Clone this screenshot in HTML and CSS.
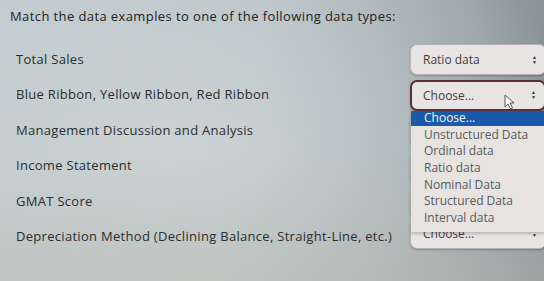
FILE: index.html
```html
<!DOCTYPE html>
<html>
<head>
<meta charset="utf-8">
<link rel="stylesheet" href="styles.css">
</head>
<body>
<div class="page">
  <h1 class="title">Match the data examples to one of the following data types:</h1>
  <div class="rows">
    <div class="row">
      <div class="label">Total Sales</div>
      <div class="select"><span>Ratio data</span><span class="arrows">&#9650;<br>&#9660;</span></div>
    </div>
    <div class="row">
      <div class="label">Blue Ribbon, Yellow Ribbon, Red Ribbon</div>
      <div class="select focus"><span>Choose...</span><span class="arrows">&#9650;<br>&#9660;</span>
        <svg class="cursor" width="12" height="16" viewBox="0 0 12 16"><path d="M1 1 L1 13 L4 10 L6.5 15 L8.5 14 L6 9 L10 9 Z" fill="#fff" stroke="#555" stroke-width="1"/></svg>
        <ul class="menu">
          <li class="active">Choose...</li>
          <li>Unstructured Data</li>
          <li>Ordinal data</li>
          <li>Ratio data</li>
          <li>Nominal Data</li>
          <li>Structured Data</li>
          <li>Interval data</li>
        </ul>
      </div>
    </div>
    <div class="row">
      <div class="label">Management Discussion and Analysis</div>
      <div class="select covered"></div>
    </div>
    <div class="row">
      <div class="label">Income Statement</div>
      <div class="select covered"></div>
    </div>
    <div class="row">
      <div class="label">GMAT Score</div>
      <div class="select covered"></div>
    </div>
    <div class="row">
      <div class="label">Depreciation Method (Declining Balance, Straight-Line, etc.)</div>
      <div class="select low"><span>Choose...</span><span class="arrows">&#9650;<br>&#9660;</span></div>
    </div>
  </div>
</div>
</body>
</html>
```
FILE: styles.css
```css
html, body {
  margin: 0;
  padding: 0;
  width: 544px;
  height: 281px;
  overflow: hidden;
}
body {
  font-family: "Open Sans", "Liberation Sans", sans-serif;
  color: #2a2c2e;
  background:
    radial-gradient(ellipse 420px 260px at 170px 150px, rgba(205,212,212,0.9), rgba(205,212,212,0) 100%),
    linear-gradient(100deg, #bfc9cd 0%, #b7c2c6 45%, #98a3a8 80%, #7f8a90 100%);
}
.page {
  position: relative;
  height: 281px;
  background: linear-gradient(180deg, rgba(0,0,0,0) 55%, rgba(190,190,182,0.5) 100%);
}
.title {
  margin: 0;
  padding: 7px 0 0 10px;
  font-size: 13px;
  font-weight: 400;
  letter-spacing: 0.4px;
  color: #1f2224;
  height: 35px;
}
.rows {
  display: flex;
  flex-direction: column;
}
.row {
  display: grid;
  grid-template-columns: 410px 136px;
  align-items: center;
  height: 35.5px;
}
.label {
  padding-left: 16px;
  padding-bottom: 2px;
  font-size: 13px;
  letter-spacing: 0.3px;
  color: #2b2e30;
}
.select {
  position: relative;
  height: 31px;
  box-sizing: border-box;
  border: 1px solid #b9b2b4;
  border-radius: 7px;
  background: #e9e4e4;
  display: flex;
  align-items: center;
  justify-content: space-between;
  padding: 0 6px 0 12px;
  font-size: 12px;
  color: #3f3e40;
  box-shadow: 0 1px 2px rgba(0,0,0,0.25);
}
.select.focus {
  border: 2px solid #5a2f3a;
  padding-left: 11px;
  z-index: 2;
}
.select.low {
  margin-top: -8px;
}
.arrows {
  font-size: 5px;
  line-height: 5px;
  text-align: center;
  color: #333;
  padding-right: 2px;
}
.cursor {
  position: absolute;
  left: 92px;
  top: 12px;
}
.menu {
  position: absolute;
  left: -1px;
  top: 29px;
  width: 134px;
  margin: 0;
  padding: 0 0 6px 0;
  list-style: none;
  background: #e6e3e1;
  box-shadow: 0 2px 3px rgba(0,0,0,0.2);
  z-index: 3;
}
.menu li {
  height: 16.6px;
  line-height: 16.6px;
  padding-left: 13px;
  font-size: 12px;
  color: #5a5a5c;
}
.menu li.active {
  background: #1b5aa8;
  color: #f4f6fa;
  height: 15px;
  line-height: 14px;
  margin-bottom: 1px;
}
```
